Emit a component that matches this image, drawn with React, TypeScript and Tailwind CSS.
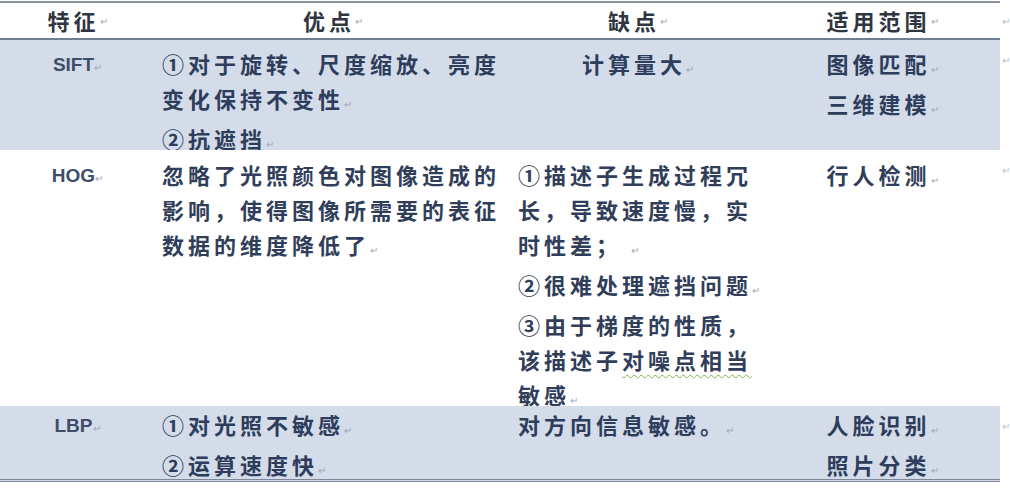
import React from 'react';

const cjk = '"Noto Sans CJK SC", "Noto Sans", sans-serif';

function Mark() {
  return <span className="text-[10px] font-normal tracking-normal text-[#9ea7b8] align-baseline">↵</span>;
}

function RowEnd() {
  return (
    <div className="w-[10px] pt-[2px] text-[10px] leading-[35px] text-[#b5bcc8] text-right">↵</div>
  );
}

function Lines({ lines, center = false }: { lines: React.ReactNode[]; center?: boolean }) {
  return (
    <div className={center ? 'flex flex-col items-center' : 'flex flex-col'}>
      {lines.map((l, i) => (
        <div key={i} className="whitespace-nowrap">{l}</div>
      ))}
    </div>
  );
}

function Label({ text }: { text: string }) {
  return (
    <div className="whitespace-nowrap pt-[1px] text-[19px] font-bold tracking-normal text-[#3e4d69]" style={{ fontFamily: '"Liberation Sans", Arial, sans-serif' }}>
      {text}<Mark />
    </div>
  );
}

export default function App() {
  return (
    <div className="w-[1010px] h-[490px] bg-white pt-[1px] overflow-hidden" style={{ fontFamily: cjk }}>
      <div className="flex flex-col">
        {/* header */}
        <div className="flex">
          <div className="flex w-[1000px] h-[39px] border-t-2 border-b-2 border-t-[#8a94a3] border-b-[#6f7e94] text-[22px] font-bold tracking-[4px] text-[#30363f] leading-[35px]">
            <div className="w-[155px] flex justify-center">特征<Mark /></div>
            <div className="w-[356px] flex justify-center">优点<Mark /></div>
            <div className="w-[254px] flex justify-center">缺点<Mark /></div>
            <div className="w-[235px] flex justify-center">适用范围<Mark /></div>
          </div>
          <RowEnd />
        </div>

        {/* SIFT */}
        <div className="flex">
          <div className="flex w-[1000px] h-[110px] bg-[#d4dcea] pt-[6px] text-[22px] font-bold tracking-[4px] text-[#2e3d5c] leading-[35px]">
            <div className="w-[155px] flex justify-center"><Label text="SIFT" /></div>
            <div className="w-[356px] px-[7px]">
              <Lines lines={['①对于旋转、尺度缩放、亮度', <>变化保持不变性<Mark /></>, <>②抗遮挡<Mark /></>]} />
            </div>
            <div className="w-[254px] flex justify-center"><div>计算量大<Mark /></div></div>
            <div className="w-[235px]">
              <Lines center lines={[<>图像匹配<Mark /></>, <>三维建模<Mark /></>]} />
            </div>
          </div>
          <RowEnd />
        </div>

        {/* HOG */}
        <div className="flex">
          <div className="flex w-[1000px] h-[256px] bg-white pt-[7px] text-[22px] font-bold tracking-[4px] text-[#303e5a] leading-[35px]">
            <div className="w-[155px] flex justify-center"><Label text="HOG" /></div>
            <div className="w-[356px] px-[7px]">
              <Lines lines={['忽略了光照颜色对图像造成的', '影响，使得图像所需要的表征', <>数据的维度降低了<Mark /></>]} />
            </div>
            <div className="w-[254px] px-[7px]">
              <Lines
                lines={[
                  '①描述子生成过程冗',
                  '长，导致速度慢，实',
                  <>时性差； <Mark /></>,
                  <>②很难处理遮挡问题<Mark /></>,
                  '③由于梯度的性质，',
                  <>该描述子<span className="underline decoration-wavy decoration-[#7fb24a] decoration-1 underline-offset-[5px]">对噪点相当</span></>,
                  <>敏感<Mark /></>,
                ]}
              />
            </div>
            <div className="w-[235px] flex justify-center"><div>行人检测<Mark /></div></div>
          </div>
          <RowEnd />
        </div>

        {/* LBP */}
        <div className="flex">
          <div className="flex w-[1000px] h-[76px] bg-[#d4dcea] pt-[1px] border-b-[3px] border-double border-b-[#7d8799] text-[22px] font-bold tracking-[4px] text-[#2e3d5c] leading-[35px]">
            <div className="w-[155px] flex justify-center"><Label text="LBP" /></div>
            <div className="w-[356px] px-[7px]">
              <Lines lines={[<>①对光照不敏感<Mark /></>, <>②运算速度快<Mark /></>]} />
            </div>
            <div className="w-[254px] px-[7px]"><div className="whitespace-nowrap">对方向信息敏感。<Mark /></div></div>
            <div className="w-[235px]">
              <Lines center lines={[<>人脸识别<Mark /></>, <>照片分类<Mark /></>]} />
            </div>
          </div>
          <RowEnd />
        </div>
      </div>
    </div>
  );
}
